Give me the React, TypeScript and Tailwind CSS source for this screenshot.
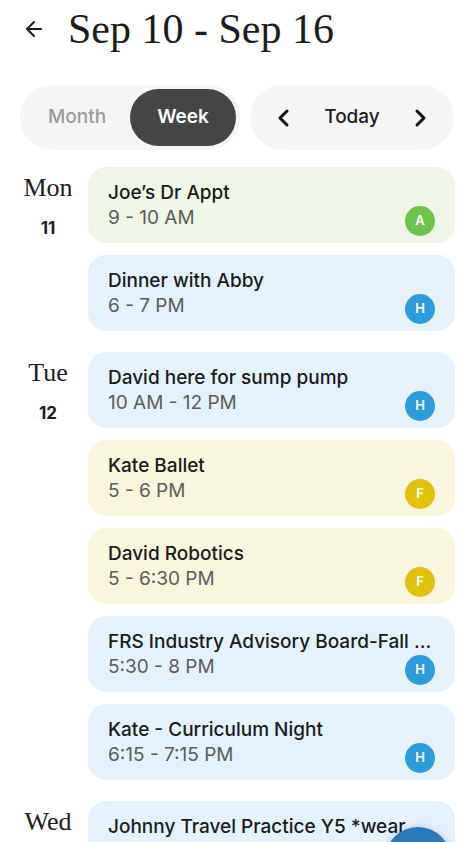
import { ArrowLeft } from "lucide-react";

type CalEvent = {
  title: string;
  time: string;
  who: "A" | "H" | "F";
};

type Day = {
  name: string;
  date?: string;
  events: CalEvent[];
};

const days: Day[] = [
  {
    name: "Mon",
    date: "11",
    events: [
      { title: "Joe’s Dr Appt", time: "9 - 10 AM", who: "A" },
      { title: "Dinner with Abby", time: "6 - 7 PM", who: "H" },
    ],
  },
  {
    name: "Tue",
    date: "12",
    events: [
      { title: "David here for sump pump", time: "10 AM - 12 PM", who: "H" },
      { title: "Kate Ballet", time: "5 - 6 PM", who: "F" },
      { title: "David Robotics", time: "5 - 6:30 PM", who: "F" },
      { title: "FRS Industry Advisory Board-Fall Meeting", time: "5:30 - 8 PM", who: "H" },
      { title: "Kate - Curriculum Night", time: "6:15 - 7:15 PM", who: "H" },
    ],
  },
  {
    name: "Wed",
    events: [{ title: "Johnny Travel Practice Y5 *wear sneakers", time: "4 - 5 PM", who: "H" }],
  },
];

const cardBg = { A: "bg-[#eef7e7]", H: "bg-[#e5f2fb]", F: "bg-[#f9f6df]" };
const dotBg = { A: "bg-[#6dc34b]", H: "bg-[#2f9bd8]", F: "bg-[#e0c20c]" };

const sans = "font-['Inter','Noto_Sans',sans-serif]";
const serif = "font-['Liberation_Serif','DejaVu_Serif',serif]";

function Chevron({ dir }: { dir: "left" | "right" }) {
  return (
    <svg width="14" height="20" viewBox="0 0 14 20" fill="none">
      <polyline
        points={dir === "left" ? "10,3 3,10 10,17" : "4,3 11,10 4,17"}
        stroke="#111"
        strokeWidth="3"
        strokeLinecap="round"
        strokeLinejoin="round"
      />
    </svg>
  );
}

function EventCard({ ev }: { ev: CalEvent }) {
  return (
    <div className={`h-[76px] rounded-[18px] pl-[20px] pr-[20px] pt-[14px] ${cardBg[ev.who]}`}>
      <div className="truncate text-[19px] leading-[24px] font-medium text-[#1b1b1b]">{ev.title}</div>
      <div className="flex items-start justify-between">
        <span className="text-[19px] leading-[26px] text-[#5c5c5c]">{ev.time}</span>
        <span
          className={`mt-[1px] flex h-[30px] w-[30px] items-center justify-center rounded-full text-[13px] font-semibold text-white ${dotBg[ev.who]}`}
        >
          {ev.who}
        </span>
      </div>
    </div>
  );
}

export default function App() {
  return (
    <div className={`relative h-[842px] w-[474px] overflow-hidden bg-white ${sans}`}>
      <header className="flex h-[58px] items-center pl-[22px]">
        <ArrowLeft size={24} strokeWidth={2} className="text-[#1c1c1c]" />
        <h1 className={`ml-[22px] text-[42px] leading-none text-[#1c1c1c] ${serif}`}>Sep 10 - Sep 16</h1>
      </header>

      <div className="mt-[27px] flex gap-[10px] px-[20px]">
        <div className="flex h-[65px] w-[220px] items-center rounded-full bg-[#f5f5f5] p-[4px]">
          <span className="flex-1 text-center text-[19px] font-medium text-[#9b9b9b]">Month</span>
          <span className="flex h-[57px] w-[106px] items-center justify-center rounded-full bg-[#454545] text-[19px] font-semibold text-white">
            Week
          </span>
        </div>
        <div className="flex h-[65px] flex-1 items-center justify-between rounded-full bg-[#f5f5f5] px-[27px]">
          <Chevron dir="left" />
          <span className="text-[19px] font-medium text-[#1e1e1e]">Today</span>
          <Chevron dir="right" />
        </div>
      </div>

      <div className="mt-[17px] flex flex-col gap-[21px]">
        {days.map((d) => (
          <div key={d.name} className="flex">
            <div className="flex w-[88px] shrink-0 flex-col items-center pl-[8px] pt-[8px]">
              <span className={`text-[26px] leading-[26px] text-[#1c1c1c] ${serif}`}>{d.name}</span>
              {d.date && <span className="mt-[15px] text-[17px] font-bold text-[#1c1c1c]">{d.date}</span>}
            </div>
            <div className="flex min-w-0 flex-1 flex-col gap-[12px] pr-[19px]">
              {d.events.map((ev) => (
                <EventCard key={ev.title} ev={ev} />
              ))}
            </div>
          </div>
        ))}
      </div>

      <div className="absolute left-[385px] top-[827px] h-[66px] w-[66px] rounded-full bg-[#2a79b6] shadow-[0_2px_8px_rgba(0,0,0,0.25)]" />
    </div>
  );
}
